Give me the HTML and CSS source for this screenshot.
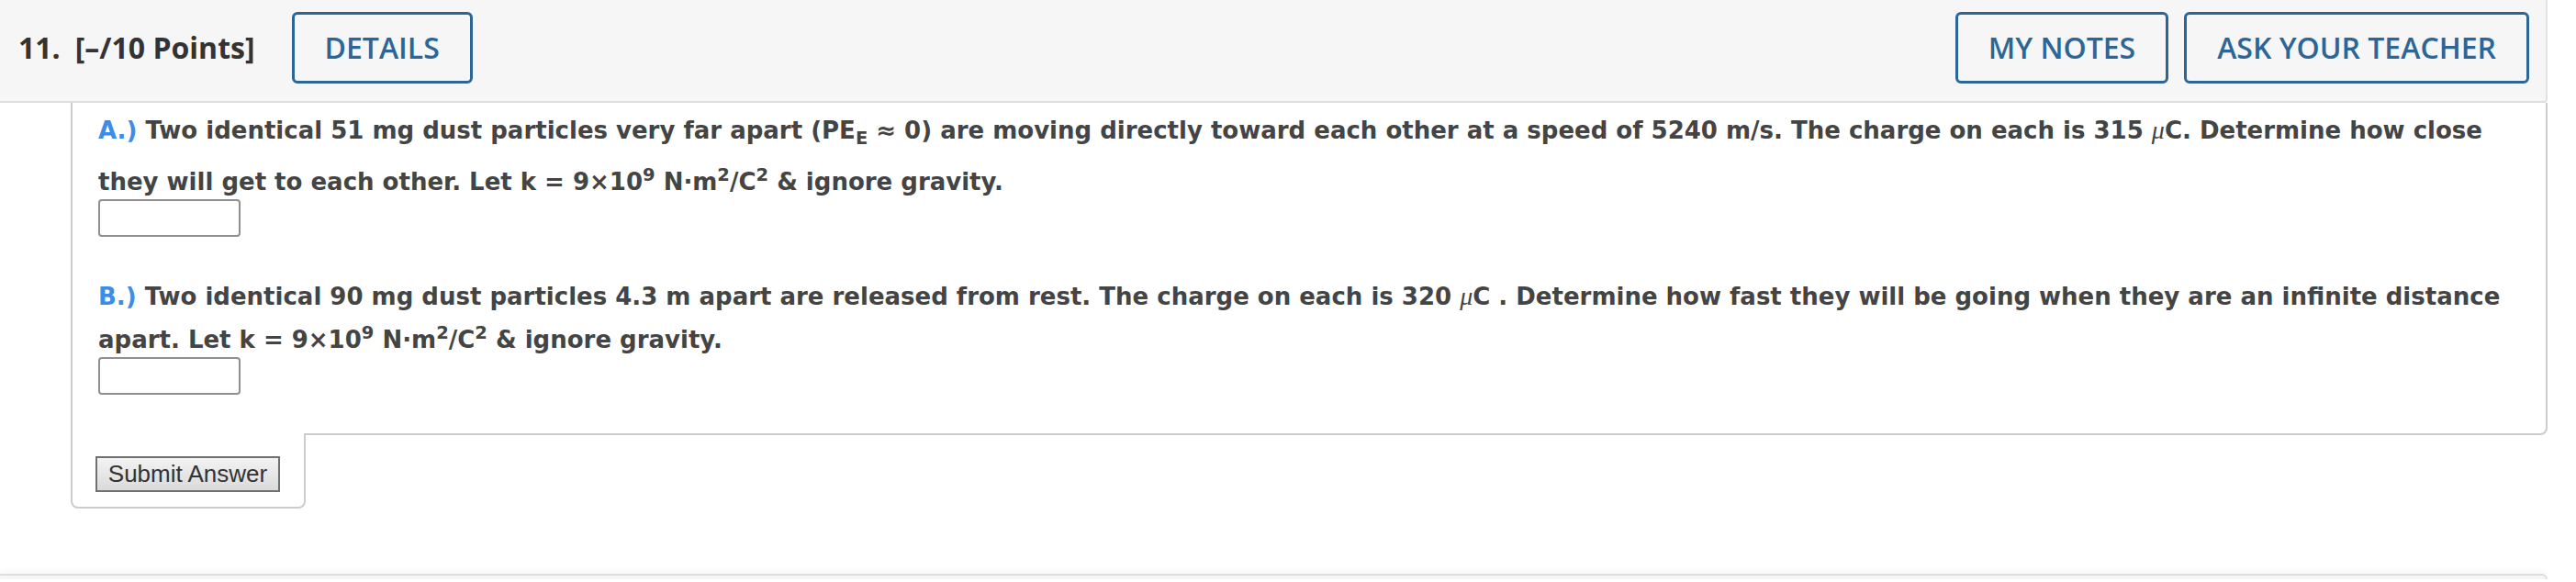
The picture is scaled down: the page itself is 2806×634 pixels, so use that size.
FILE: index.html
```html
<!DOCTYPE html>
<html lang="en">
<head>
<meta charset="utf-8">
<title>Question 11</title>
<link rel="stylesheet" href="styles.css">
</head>
<body>
<div class="question">
  <header class="q-head">
    <div class="q-title"><span class="q-num">11.</span><span class="q-pts">[–/10 Points]</span></div>
    <button class="q-btn q-details" type="button">DETAILS</button>
    <div class="q-actions">
      <button class="q-btn" type="button">MY NOTES</button>
      <button class="q-btn" type="button">ASK YOUR TEACHER</button>
    </div>
  </header>
  <div class="q-body">
    <div class="part">
      <p class="part-text"><span class="part-label">A.)</span> Two identical 51 mg dust particles very far apart (PE<sub>E</sub> ≈ 0) are moving directly toward each other at a speed of 5240 m/s. The charge on each is 315 <i class="mu">μ</i>C. Determine how close they will get to each other. Let k = 9×10<sup>9</sup> N·m<sup>2</sup>/C<sup>2</sup> &amp; ignore gravity.</p>
      <input class="answer" type="text" aria-label="Answer A">
    </div>
    <div class="part part-b">
      <p class="part-text"><span class="part-label">B.)</span> Two identical 90 mg dust particles 4.3 m apart are released from rest. The charge on each is 320 <i class="mu">μ</i>C . Determine how fast they will be going when they are an infinite distance apart. Let k = 9×10<sup>9</sup> N·m<sup>2</sup>/C<sup>2</sup> &amp; ignore gravity.</p>
      <input class="answer" type="text" aria-label="Answer B">
    </div>
  </div>
  <div class="q-submit"><button class="submit" type="button">Submit Answer</button></div>
</div>
<div class="next-q"></div>
</body>
</html>
```

FILE: styles.css
```css
* { box-sizing: border-box; }

html, body { overflow: hidden; }

body {
  margin: 0;
  background: #fff;
  font-family: "Open Sans", "Liberation Sans", sans-serif;
}

.question {
  width: 2775px;
}

.q-head {
  display: flex;
  align-items: baseline;
  height: 112px;
  padding: 13px 18px 0 20px;
  background: #f6f6f6;
  border-bottom: 2px solid #dddddd;
  border-right: 2px solid #e2e2e2;
  border-bottom-right-radius: 4px;
}

.q-title {
  font-weight: 700;
  font-size: 32px;
  color: #333;
  white-space: nowrap;
}

.q-pts { margin-left: 16px; }

.q-btn {
  font-family: "Open Sans", sans-serif;
  font-weight: 600;
  font-size: 32px;
  color: #2c6697;
  background: transparent;
  border: 3px solid #2c6697;
  border-radius: 6px;
  height: 78px;
  padding: 0 33px;
  line-height: 72px;
  white-space: nowrap;
}

.q-details { margin-left: 40px; }

.q-actions {
  margin-left: auto;
  display: flex;
  gap: 17px;
}

.q-body {
  margin-left: 77px;
  border-left: 2px solid #cccccc;
  border-right: 2px solid #cccccc;
  border-bottom: 2px solid #cccccc;
  border-bottom-right-radius: 8px;
  padding: 6px 26px 42px 28px;
  background: #fff;
}

.part-text {
  margin: 0;
  font-family: "DejaVu Sans", Verdana, sans-serif;
  font-weight: 700;
  font-size: 26px;
  line-height: 47px;
  color: #444;
}

.part-label { color: #3d8de8; }

.part-b { margin-top: 41px; }

.part-text sub {
  font-size: 0.75em;
  line-height: 48px;
  vertical-align: sub;
}

.part-text sup {
  font-size: 0.75em;
  line-height: 0;
  vertical-align: super;
}

.mu {
  font-family: "Liberation Serif", "DejaVu Serif", serif;
  font-style: italic;
  font-weight: 400;
  font-size: 28px;
}

.answer {
  display: block;
  width: 155px;
  height: 41px;
  margin: -5px 0 0 0;
  border: 2px solid #8f8f8f;
  border-radius: 4px;
  background: #fff;
}

.q-submit {
  margin-left: 77px;
  margin-top: -2px;
  width: 256px;
  border: 2px solid #cccccc;
  border-top: none;
  border-radius: 0 0 8px 8px;
  background: #fff;
  padding: 25px 0 16px 25px;
}

.submit {
  display: block;
  font-family: "Liberation Sans", Arial, sans-serif;
  font-size: 26px;
  color: #333;
  width: 201px;
  height: 39px;
  padding: 0;
  line-height: 35px;
  border: 2px solid #707070;
  background: linear-gradient(#f3f3f3, #dadada);
}

.next-q {
  margin-top: 71px;
  width: 2775px;
  height: 6px;
  background: #f6f6f6;
  border-top: 2px solid #dddddd;
  border-right: 2px solid #dddddd;
  border-top-right-radius: 6px;
  box-shadow: 0 -3px 6px rgba(0, 0, 0, 0.04);
}
```
